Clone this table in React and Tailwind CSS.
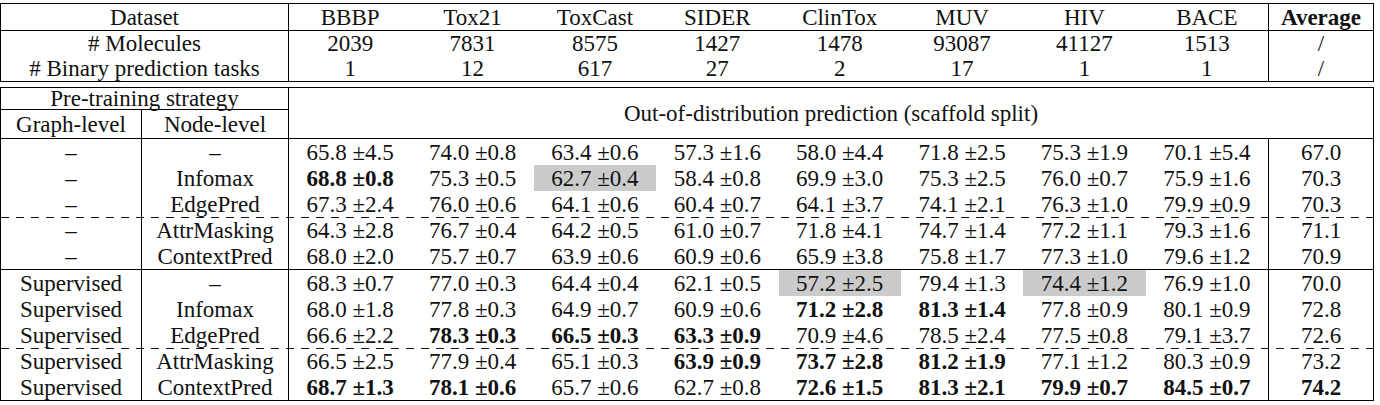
const DATASETS = ['BBBP', 'Tox21', 'ToxCast', 'SIDER', 'ClinTox', 'MUV', 'HIV', 'BACE']
const MOLECULES = ['2039', '7831', '8575', '1427', '1478', '93087', '41127', '1513']
const TASKS = ['1', '12', '617', '27', '2', '17', '1', '1']

// "*" = bold, "#" = grey highlighted cell
const GROUPS = [
  {
    graph: '–',
    rows: [
      ['–', ['65.8 ±4.5', '74.0 ±0.8', '63.4 ±0.6', '57.3 ±1.6', '58.0 ±4.4', '71.8 ±2.5', '75.3 ±1.9', '70.1 ±5.4'], '67.0'],
      ['Infomax', ['*68.8 ±0.8', '75.3 ±0.5', '#62.7 ±0.4', '58.4 ±0.8', '69.9 ±3.0', '75.3 ±2.5', '76.0 ±0.7', '75.9 ±1.6'], '70.3'],
      ['EdgePred', ['67.3 ±2.4', '76.0 ±0.6', '64.1 ±0.6', '60.4 ±0.7', '64.1 ±3.7', '74.1 ±2.1', '76.3 ±1.0', '79.9 ±0.9'], '70.3'],
      ['AttrMasking', ['64.3 ±2.8', '76.7 ±0.4', '64.2 ±0.5', '61.0 ±0.7', '71.8 ±4.1', '74.7 ±1.4', '77.2 ±1.1', '79.3 ±1.6'], '71.1'],
      ['ContextPred', ['68.0 ±2.0', '75.7 ±0.7', '63.9 ±0.6', '60.9 ±0.6', '65.9 ±3.8', '75.8 ±1.7', '77.3 ±1.0', '79.6 ±1.2'], '70.9'],
    ],
  },
  {
    graph: 'Supervised',
    rows: [
      ['–', ['68.3 ±0.7', '77.0 ±0.3', '64.4 ±0.4', '62.1 ±0.5', '#57.2 ±2.5', '79.4 ±1.3', '#74.4 ±1.2', '76.9 ±1.0'], '70.0'],
      ['Infomax', ['68.0 ±1.8', '77.8 ±0.3', '64.9 ±0.7', '60.9 ±0.6', '*71.2 ±2.8', '*81.3 ±1.4', '77.8 ±0.9', '80.1 ±0.9'], '72.8'],
      ['EdgePred', ['66.6 ±2.2', '*78.3 ±0.3', '*66.5 ±0.3', '*63.3 ±0.9', '70.9 ±4.6', '78.5 ±2.4', '77.5 ±0.8', '79.1 ±3.7'], '72.6'],
      ['AttrMasking', ['66.5 ±2.5', '77.9 ±0.4', '65.1 ±0.3', '*63.9 ±0.9', '*73.7 ±2.8', '*81.2 ±1.9', '77.1 ±1.2', '80.3 ±0.9'], '73.2'],
      ['ContextPred', ['*68.7 ±1.3', '*78.1 ±0.6', '65.7 ±0.6', '62.7 ±0.8', '*72.6 ±1.5', '*81.3 ±2.1', '*79.9 ±0.7', '*84.5 ±0.7'], '*74.2'],
    ],
  },
]

function Value({ v, className = '' }) {
  const bold = v.startsWith('*')
  const shaded = v.startsWith('#')
  const text = bold || shaded ? v.slice(1) : v
  return (
    <div
      className={`flex items-center justify-center ${shaded ? 'bg-[#cbcbcb]' : ''} ${bold ? 'font-bold' : ''} ${className}`}
    >
      {text}
    </div>
  )
}

export default function App() {
  return (
    <div
      className="bg-white text-[#111] text-[23px] leading-none pt-[3px] w-[1380px] h-[405px]"
      style={{ fontFamily: '"Liberation Serif", "Times New Roman", serif' }}
    >
      {/* Dataset summary */}
      <div className="w-[1374px] border border-black">
        <div className="grid grid-cols-[288px_repeat(8,minmax(0,1fr))_105px] h-[27px] border-b border-black">
          <div className="flex items-center justify-center border-r border-black">Dataset</div>
          {DATASETS.map((d) => (
            <div key={d} className="flex items-center justify-center">{d}</div>
          ))}
          <div className="flex items-center justify-center border-l border-black font-bold">Average</div>
        </div>
        {[['# Molecules', MOLECULES], ['# Binary prediction tasks', TASKS]].map(([label, vals]) => (
          <div key={label} className="grid grid-cols-[288px_repeat(8,minmax(0,1fr))_105px] h-[25px]">
            <div className="flex items-center justify-center border-r border-black">{label}</div>
            {vals.map((v, i) => (
              <div key={i} className="flex items-center justify-center">{v}</div>
            ))}
            <div className="flex items-center justify-center border-l border-black">/</div>
          </div>
        ))}
      </div>

      {/* Results */}
      <div className="w-[1374px] border border-black mt-[5px]">
        <div className="grid grid-cols-[288px_1fr] border-b border-black">
          <div className="border-r border-black">
            <div className="h-[22px] flex items-center justify-center border-b border-black">Pre-training strategy</div>
            <div className="grid grid-cols-[141px_1fr] h-[28px]">
              <div className="flex items-center justify-center border-r border-black">Graph-level</div>
              <div className="flex items-center justify-center">Node-level</div>
            </div>
          </div>
          <div className="flex items-center justify-center">Out-of-distribution prediction (scaffold split)</div>
        </div>

        {GROUPS.map((g, gi) => (
          <div key={gi} className={gi > 0 ? 'border-t border-black' : ''}>
            {g.rows.map(([node, vals, avg], ri) => (
              <div
                key={ri}
                className={`grid grid-cols-[141px_147px_repeat(8,minmax(0,1fr))_105px] h-[26px] ${
                  ri === 3
                    ? 'bg-[repeating-linear-gradient(90deg,#111_0_8px,transparent_8px_15px)] bg-no-repeat bg-[length:100%_1px] bg-top'
                    : ''
                }`}
              >
                <div className="flex items-center justify-center border-r border-black">{g.graph}</div>
                <div className="flex items-center justify-center border-r border-black">{node}</div>
                {vals.map((v, i) => (
                  <Value key={i} v={v} />
                ))}
                <Value v={avg} className="border-l border-black" />
              </div>
            ))}
          </div>
        ))}
      </div>
    </div>
  )
}
